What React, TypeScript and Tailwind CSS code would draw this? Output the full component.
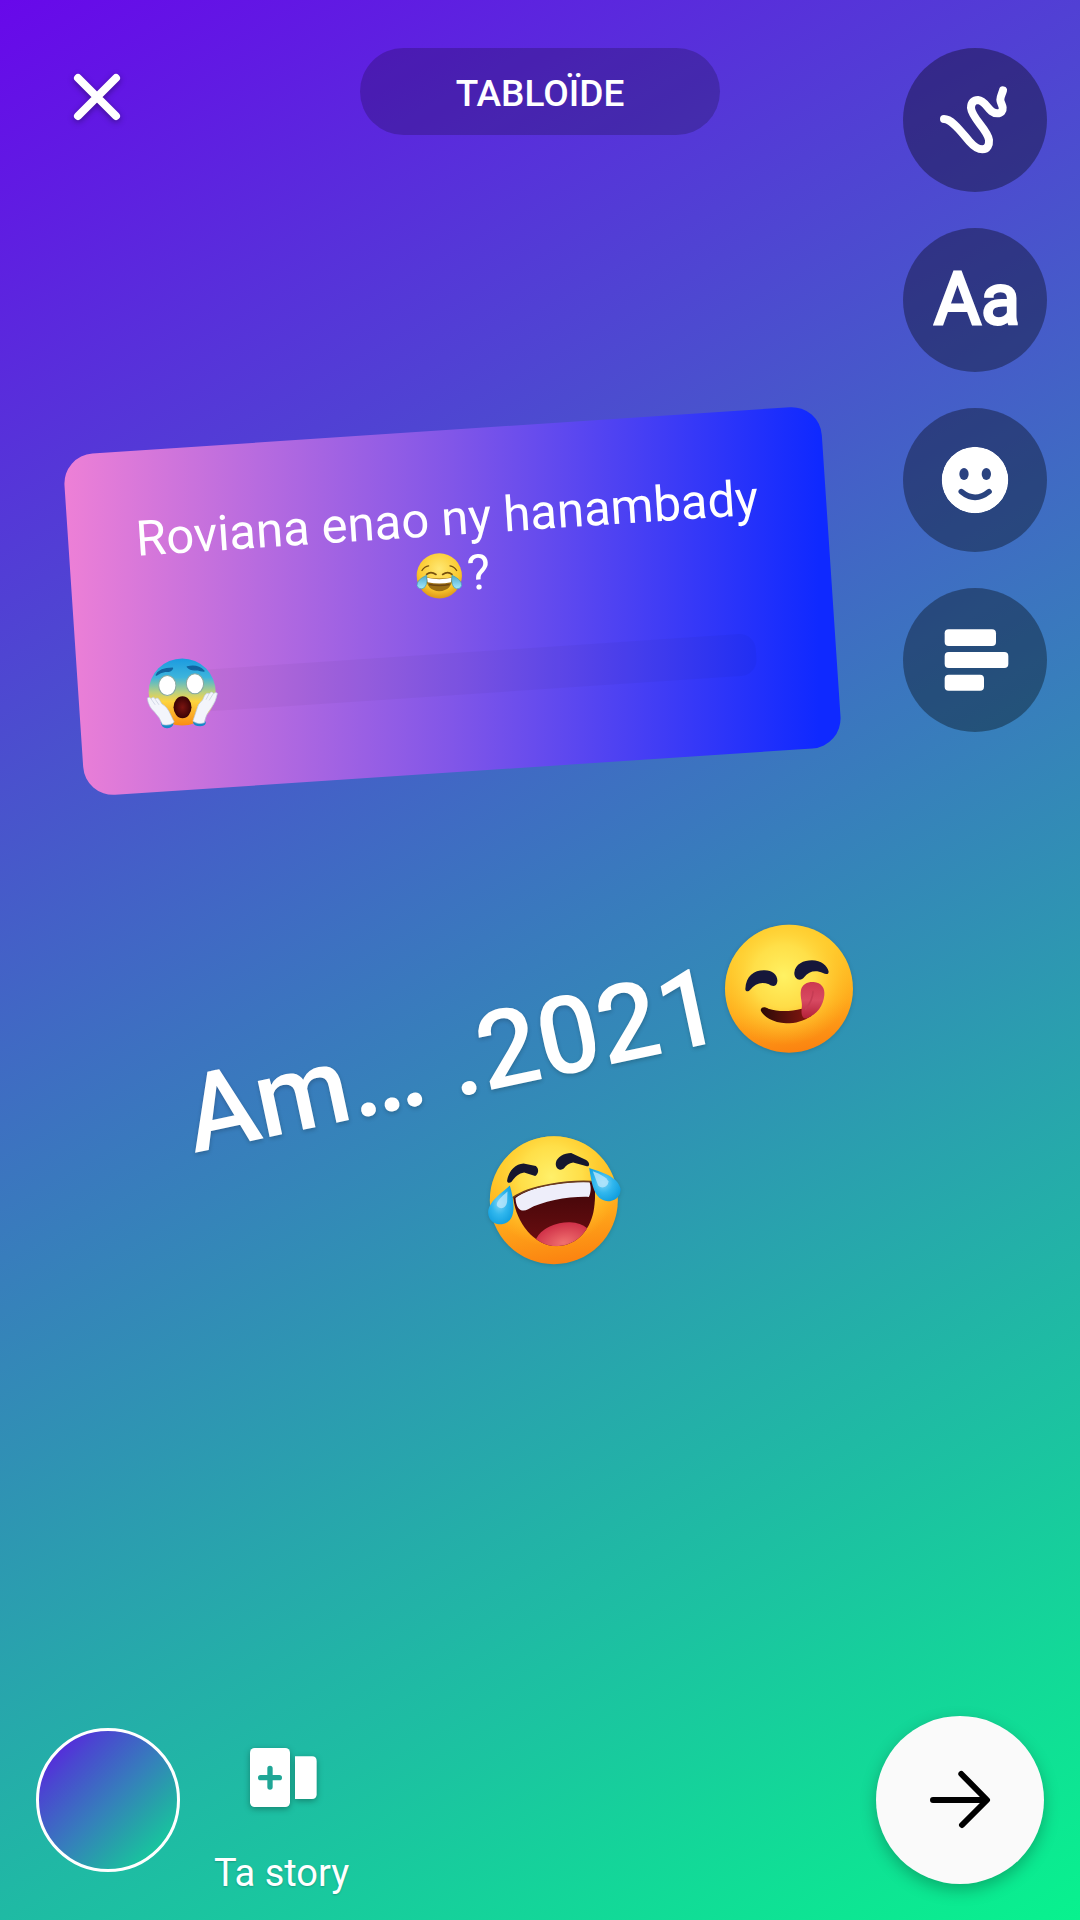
import { useState, type ReactNode } from "react";

type TTool = {
  name: string;
  icon: ReactNode;
};

const DrawIcon = () => (
  <svg viewBox="39 54 432 432" className="size-full" aria-hidden="true">
    <path
      d="M162 267 C186 267 212 304 238 334 C252 350 264 358 277 358 C293 358 298 344 297 330 C293 298 246 266 243 234 C243 217 252 210 264 210 C290 212 295 250 322 250 C334 250 339 242 338 233 C337 224 331 218 331 209 C331 198 337 190 339 181"
      fill="none"
      stroke="#fff"
      strokeWidth="24"
      strokeLinecap="round"
      strokeLinejoin="round"
    />
  </svg>
);

const StickerIcon = () => (
  <svg viewBox="39 54 432 432" className="size-full" aria-hidden="true">
    <mask id="sticker-face">
      <circle cx="255" cy="270" r="100" fill="#fff" />
      <ellipse cx="222" cy="252" rx="14" ry="18" fill="#000" />
      <ellipse cx="289" cy="252" rx="14" ry="18" fill="#000" />
      <path d="M214 305 Q255 339 297 305" fill="none" stroke="#000" strokeWidth="17" strokeLinecap="round" />
    </mask>
    <circle cx="255" cy="270" r="100" fill="#fff" mask="url(#sticker-face)" />
  </svg>
);

const AlignIcon = () => (
  <svg viewBox="39 594 432 432" className="size-full" fill="#fff" aria-hidden="true">
    <rect x="164" y="718" width="154" height="50" rx="12" />
    <rect x="164" y="786" width="191" height="48" rx="12" />
    <rect x="164" y="854" width="118" height="48" rx="12" />
  </svg>
);

const JoyEmoji = ({ className }: { className: string }) => (
  <svg viewBox="0 0 144 144" className={className} role="img" aria-label="😂">
    <defs>
      <radialGradient id="joy-skin" cx="50%" cy="35%" r="65%">
        <stop offset="0" stopColor="#ffe873" />
        <stop offset="0.7" stopColor="#fbc92e" />
        <stop offset="1" stopColor="#dd9618" />
      </radialGradient>
      <linearGradient id="joy-tear" x1="0" y1="0" x2="0" y2="1">
        <stop offset="0" stopColor="#4ba9cc" />
        <stop offset="1" stopColor="#a5e8fb" />
      </linearGradient>
    </defs>
    <circle cx="72" cy="72" r="68" fill="url(#joy-skin)" />
    <path d="M20 56 Q28 43 40 42 M104 42 Q116 43 124 56" fill="none" stroke="#76500f" strokeWidth="4" strokeLinecap="round" />
    <path d="M34 68 Q46 57 62 68 M82 68 Q98 57 110 68" fill="none" stroke="#76500f" strokeWidth="5" strokeLinecap="round" />
    <path d="M32 76 Q72 84 112 76 Q110 116 72 118 Q34 116 32 76Z" fill="#9b6d13" />
    <path d="M35 78 Q72 86 109 78 L107 91 Q72 99 37 91Z" fill="#fff" />
    <path d="M41 98 Q72 104 103 98" fill="none" stroke="#6d4510" strokeWidth="5" />
    <path d="M34 70 Q4 84 5 101 Q8 112 20 111 Q38 107 34 70Z" fill="url(#joy-tear)" stroke="#3f9cb7" strokeWidth="2" />
    <path d="M110 70 Q140 84 139 101 Q136 112 124 111 Q106 107 110 70Z" fill="url(#joy-tear)" stroke="#3f9cb7" strokeWidth="2" />
  </svg>
);

const ScreamEmoji = ({ className }: { className: string }) => (
  <svg viewBox="44 46 220 220" className={className} role="img" aria-label="😱">
    <defs>
      <linearGradient id="scream-skin" x1="0" y1="0" x2="0" y2="1">
        <stop offset="0" stopColor="#1b9be0" />
        <stop offset="0.28" stopColor="#3db4dc" />
        <stop offset="0.5" stopColor="#b9cf80" />
        <stop offset="0.64" stopColor="#fdd43f" />
        <stop offset="1" stopColor="#fb8c12" />
      </linearGradient>
      <radialGradient id="scream-mouth">
        <stop offset="0" stopColor="#7a1410" />
        <stop offset="1" stopColor="#390305" />
      </radialGradient>
    </defs>
    <circle cx="153" cy="153" r="97" fill="url(#scream-skin)" />
    <path d="M78 104 Q88 84 125 84 Q122 94 104 93 Q90 95 78 104Z" fill="#12639f" stroke="#12639f" strokeWidth="4" strokeLinejoin="round" />
    <path d="M168 80 Q198 73 216 92 Q206 91 196 88 Q178 91 168 80Z" fill="#12639f" stroke="#12639f" strokeWidth="4" strokeLinejoin="round" />
    <ellipse cx="110" cy="134" rx="25" ry="29" fill="#fff" stroke="#8aa9a2" strokeWidth="3" />
    <ellipse cx="190" cy="129" rx="25" ry="29" fill="#fff" stroke="#8aa9a2" strokeWidth="3" />
    <ellipse cx="154" cy="197" rx="26" ry="32" fill="url(#scream-mouth)" />
    <path d="M91 240 L128 240 Q128 257 110 258 Q94 259 91 240Z" fill="#1689c9" />
    <path d="M184 238 L221 238 Q224 250 206 252 Q186 252 184 238Z" fill="#1689c9" />
    <path
      d="M52 171 Q57 164 63 172 Q70 163 75 173 Q82 166 88 177 L94 187 Q110 196 119 217 L130 240 Q118 252 96 247 Q88 226 73 211 Q55 195 52 171Z"
      fill="#f3f5fb"
      stroke="#bcc6d7"
      strokeWidth="2"
    />
    <path
      d="M255 157 Q251 151 244 157 Q239 149 232 157 Q225 153 218 163 L212 176 Q198 187 194 207 L184 237 Q197 248 217 242 Q219 222 238 198 Q251 180 255 157Z"
      fill="#f3f5fb"
      stroke="#bcc6d7"
      strokeWidth="2"
    />
    <path d="M63 173 L75 190 M75 174 L86 190 M243 158 L231 177 M231 158 L222 175" stroke="#c3cbdd" strokeWidth="2" />
  </svg>
);

const YumEmoji = ({ className }: { className: string }) => (
  <svg viewBox="61 58 408 408" className={className} role="img" aria-label="😋">
    <defs>
      <radialGradient id="yum-glow" cx="46%" cy="40%" r="54%">
        <stop offset="0" stopColor="#fff263" />
        <stop offset="0.45" stopColor="#ffe24c" stopOpacity="0.9" />
        <stop offset="1" stopColor="#ffc928" stopOpacity="0" />
      </radialGradient>
      <linearGradient id="yum-skin" x1="0.4" y1="0" x2="0.55" y2="1">
        <stop offset="0.2" stopColor="#ffc92a" />
        <stop offset="0.65" stopColor="#ffaa1c" />
        <stop offset="1" stopColor="#fb8210" />
      </linearGradient>
      <linearGradient id="yum-tongue" x1="0" y1="0" x2="0" y2="1">
        <stop offset="0" stopColor="#cc3850" />
        <stop offset="0.5" stopColor="#d84a62" />
        <stop offset="1" stopColor="#b32138" />
      </linearGradient>
      <linearGradient id="yum-mouth" x1="0" y1="0" x2="1" y2="0">
        <stop offset="0" stopColor="#2c0a06" />
        <stop offset="1" stopColor="#8a1710" />
      </linearGradient>
    </defs>
    <circle cx="265" cy="262" r="192" fill="url(#yum-skin)" />
    <circle cx="265" cy="262" r="192" fill="url(#yum-glow)" />
    <path d="M134 263 C136 224 160 207 190 207 C218 206 235 226 229 245 C226 257 213 255 205 249 C184 240 164 245 148 266 C142 273 134 270 134 263Z" fill="#15163a" />
    <path d="M281 214 C284 188 309 177 334 177 C361 177 381 194 384 211 C383 221 375 219 367 215 C345 205 325 209 311 227 C299 243 280 233 281 214Z" fill="#15163a" />
    <path d="M180 326 C183 315 194 317 203 322 C237 333 271 330 303 322 L334 343 C308 359 286 366 256 366 C218 364 187 346 180 326Z" fill="url(#yum-mouth)" />
    <path d="M301 266 C305 248 321 241 339 242 C362 244 374 260 371 282 C368 312 350 340 318 351 C305 352 301 340 303 322 C307 303 297 288 301 266Z" fill="url(#yum-tongue)" />
    <path d="M337 271 C336 292 328 307 315 323" fill="none" stroke="#c63c54" strokeWidth="5" strokeLinecap="round" />
  </svg>
);

const LaughEmoji = ({ className }: { className: string }) => (
  <svg viewBox="49 36 408 408" className={className} role="img" aria-label="😂">
    <defs>
      <radialGradient id="laugh-glow" cx="48%" cy="32%" r="54%">
        <stop offset="0" stopColor="#fff06a" />
        <stop offset="0.45" stopColor="#ffe24c" stopOpacity="0.9" />
        <stop offset="1" stopColor="#ffc928" stopOpacity="0" />
      </radialGradient>
      <linearGradient id="laugh-skin" x1="0.4" y1="0" x2="0.55" y2="1">
        <stop offset="0.2" stopColor="#ffc628" />
        <stop offset="0.65" stopColor="#ffa61a" />
        <stop offset="1" stopColor="#fb8210" />
      </linearGradient>
      <linearGradient id="laugh-mouth" x1="0" y1="0" x2="0" y2="1">
        <stop offset="0" stopColor="#3b0508" />
        <stop offset="1" stopColor="#6f0e11" />
      </linearGradient>
      <radialGradient id="laugh-tongue" cx="50%" cy="60%" r="60%">
        <stop offset="0" stopColor="#f0706f" />
        <stop offset="1" stopColor="#cf2f47" />
      </radialGradient>
      <radialGradient id="laugh-tear" cx="45%" cy="45%" r="60%">
        <stop offset="0" stopColor="#7fd4f6" />
        <stop offset="0.5" stopColor="#31b7ee" />
        <stop offset="1" stopColor="#119fdf" />
      </radialGradient>
      <clipPath id="laugh-clip">
        <path d="M131 232 C180 196 300 180 366 184 C380 190 378 226 374 262 C366 325 325 376 262 378 C195 378 140 310 131 232Z" />
      </clipPath>
    </defs>
    <circle cx="253" cy="240" r="192" fill="url(#laugh-skin)" />
    <circle cx="253" cy="240" r="192" fill="url(#laugh-glow)" />
    <path d="M113 180 C118 150 140 131 162 130 L199 137 C210 145 207 162 197 167 L164 157 C148 159 137 170 127 184 C120 191 112 188 113 180Z" fill="#15162e" />
    <path d="M259 128 C262 110 284 98 305 98 L350 119 C362 126 361 140 352 138 L311 127 C299 128 290 136 283 145 C272 154 257 144 259 128Z" fill="#15162e" />
    <g clipPath="url(#laugh-clip)">
      <rect x="120" y="170" width="270" height="220" fill="url(#laugh-mouth)" />
      <ellipse cx="280" cy="358" rx="84" ry="50" transform="rotate(-12 280 358)" fill="url(#laugh-tongue)" />
      <path d="M138 233 C190 196 290 184 360 185 C366 200 364 218 358 230 C300 228 220 242 176 267 C158 277 140 270 138 233Z" fill="#eeeefa" />
    </g>
    <path d="M131 232 C180 196 300 180 366 184" fill="none" stroke="#6b3d1e" strokeWidth="5" strokeLinecap="round" />
    <path d="M121 196 C96 219 56 245 56 278 C57 303 79 314 97 312 C145 305 134 240 121 196Z" fill="url(#laugh-tear)" />
    <path d="M359 143 C392 154 446 168 453 205 C455 230 434 243 415 243 C373 238 367 190 359 143Z" fill="url(#laugh-tear)" />
    <path d="M114 214 C96 230 80 244 82 256 C91 270 110 266 113 244Z" fill="#b9e6fb" opacity="0.8" />
    <path d="M370 153 C390 161 411 170 417 184 C416 201 396 207 386 196Z" fill="#b9e6fb" opacity="0.8" />
  </svg>
);

const tools: TTool[] = [
  { name: "Dessiner", icon: <DrawIcon /> },
  { name: "Texte", icon: <span className="pl-1 text-[72px] leading-none font-normal [-webkit-text-stroke:3px_white]">Aa</span> },
  { name: "Stickers", icon: <StickerIcon /> },
  { name: "Alignement", icon: <AlignIcon /> },
];

function EmojiSlider() {
  const [value, setValue] = useState(0);

  return (
    <div className="relative mt-[50px] h-[42px] rounded-2xl bg-black/3">
      <input
        type="range"
        min={0}
        max={100}
        value={value}
        onChange={(e) => setValue(Number(e.target.value))}
        aria-label="Roviana enao ny hanambady"
        className="absolute inset-0 z-10 size-full cursor-pointer opacity-0"
      />
      <div className="absolute inset-y-0 right-14 left-0">
        <div className="absolute -top-4" style={{ left: `${value}%` }}>
          <ScreamEmoji className="-ml-3.5 size-19 rotate-[3.8deg]" />
        </div>
      </div>
    </div>
  );
}

export default function App() {
  return (
    <div className="relative flex min-h-screen w-full flex-col overflow-hidden bg-[linear-gradient(151deg,#6808ea,#08f28e)] font-[Roboto,sans-serif] text-white">
      <header className="grid grid-cols-[1fr_auto_1fr] items-start px-[33px] pt-12">
        <button type="button" aria-label="Fermer" className="flex h-[98px] w-32 items-center justify-center">
          <svg viewBox="0 0 48 48" className="size-12 drop-shadow-[0_2px_3px_rgba(0,0,0,0.35)]" aria-hidden="true">
            <path d="M5 5 L43 43 M43 5 L5 43" stroke="#fff" strokeWidth="8" strokeLinecap="round" />
          </svg>
        </button>

        <button type="button" className="flex h-[87px] w-[360px] items-center justify-center rounded-full bg-black/20 pt-1 text-[37px] font-medium">
          TABLOÏDE
        </button>

        <nav className="flex flex-col gap-9 justify-self-end">
          {tools.map((tool) => (
            <button
              type="button"
              key={tool.name}
              aria-label={tool.name}
              className="flex size-36 items-center justify-center rounded-full bg-black/35"
            >
              {tool.icon}
            </button>
          ))}
        </nav>
      </header>

      {/* stickers */}
      <section className="absolute top-[430px] left-[73px] w-[759px] rotate-[-3.8deg] rounded-[30px] bg-[linear-gradient(93.8deg,#ee80d6,#8156e8_50%,#0f29ff_97%)] px-20 pt-[61px] pb-[77px]">
        <h1 className="-mx-4 text-center text-[49px] leading-14 font-normal">
          Roviana enao ny hanambady
          <span className="flex items-center justify-center gap-1 pl-1">
            <JoyEmoji className="size-12 rotate-[3.8deg]" />?
          </span>
        </h1>
        <EmojiSlider />
      </section>

      <div className="absolute top-[964px] left-[49.7%] flex -translate-x-1/2 -rotate-12 flex-col items-center text-[108px] leading-none font-medium whitespace-nowrap [text-shadow:0_2px_4px_rgba(0,0,0,0.2)]">
        <div className="flex h-40 items-center gap-1">
          <span>Am… .2021</span>
          <YumEmoji className="size-34 rotate-12 drop-shadow-sm" />
        </div>
        <div className="flex h-39 items-center">
          <LaughEmoji className="size-34 rotate-12 drop-shadow-sm" />
        </div>
      </div>

      <footer className="mt-auto flex items-center px-9 pb-[25px]">
        <button
          type="button"
          aria-label="Couleur"
          className="size-36 rounded-full border-[3px] border-white bg-[linear-gradient(135deg,#5b1fe0_8%,#4a47d0_24%,#3580bb_52%,#25a5a8_70%,#12d29a_92%)]"
        />
        <button type="button" className="ml-[34px] flex flex-col items-center pt-[43px]">
          <svg viewBox="744 145 201 180" className="h-[60px] w-[67px] overflow-visible drop-shadow-[0_2px_3px_rgba(0,0,0,0.3)]" aria-hidden="true">
            <rect x="750" y="145" width="120" height="177" rx="14" fill="#fff" />
            <path d="M885 170 H936 Q950 170 950 184 V284 Q950 298 936 298 H885Z" fill="#fff" />
            <path d="M810 206 V262 M782 234 H838" stroke="#1fa696" strokeWidth="16" strokeLinecap="round" />
          </svg>
          <span className="mt-[43px] text-[38px] leading-11 [text-shadow:0_1px_2px_rgba(0,0,0,0.2)]">Ta story</span>
        </button>
        <button
          type="button"
          aria-label="Suivant"
          className="ml-auto size-42 rounded-full bg-[#fafafa] shadow-[0_6px_16px_rgba(0,0,0,0.25)]"
        >
          <svg viewBox="78 78 504 504" className="size-full" fill="none" stroke="#000" strokeWidth="18" strokeLinecap="round" strokeLinejoin="round" aria-hidden="true">
            <path d="M249 330 H408 M334 252 L411 330 L336 405" />
          </svg>
        </button>
      </footer>
    </div>
  );
}
